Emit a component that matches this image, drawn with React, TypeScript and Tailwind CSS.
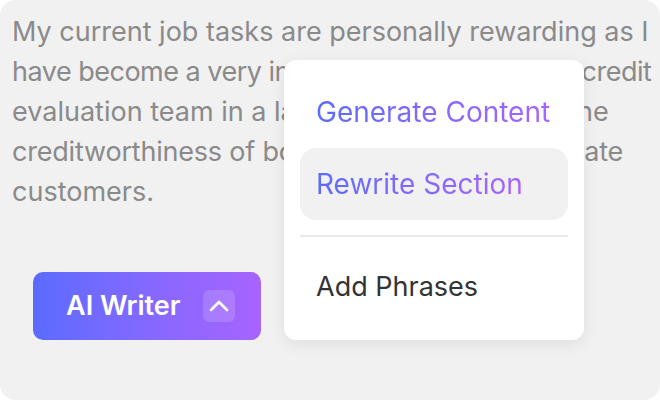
export default function App() {
  return (
    <div className="w-[660px] h-[400px] bg-white font-['Inter',sans-serif]">
      <div className="relative w-full h-full rounded-[16px] bg-[#f1f1f1] overflow-hidden">
        <p className="px-3 pt-3 text-[27px] leading-[40px] text-[#8a8a8a] whitespace-nowrap">
          My current job tasks are personally rewarding as I
          <br />
          <span className="tracking-[-0.5px]">
            have become a very important member of the credit
          </span>
          <br />
          evaluation team in a larger bank, assessing the
          <br />
          <span className="tracking-[-0.2px]">
            creditworthiness of both business and corporate
          </span>
          <br />
          customers.
        </p>

        <div className="pl-[33px] mt-[60px]">
          <button className="flex items-center h-[68px] w-[228px] pl-[33px] pr-[26px] rounded-[10px] bg-gradient-to-r from-[#5a6bff] to-[#a763ff] text-white">
            <span className="text-[27px] font-semibold">AI Writer</span>
            <span className="ml-auto flex items-center justify-center w-8 h-8 rounded-[6px] bg-white/15">
              <svg width="20" height="12" viewBox="0 0 20 12" fill="none">
                <polyline
                  points="2,10 10,2 18,10"
                  stroke="white"
                  strokeWidth="2.6"
                  strokeLinecap="round"
                  strokeLinejoin="round"
                />
              </svg>
            </span>
          </button>
        </div>

        <div className="absolute left-[284px] top-[60px] w-[300px] h-[280px] rounded-[12px] bg-white shadow-[0_4px_16px_rgba(0,0,0,0.08)] px-4 pt-4 text-[28px]">
          <div className="h-[72px] flex items-center px-4">
            <span className="bg-gradient-to-r from-[#5a6bff] to-[#a763ff] bg-clip-text text-transparent">
              Generate Content
            </span>
          </div>
          <div className="h-[72px] flex items-center px-4 rounded-[16px] bg-[#f1f1f1]">
            <span className="bg-gradient-to-r from-[#5a6bff] to-[#a763ff] bg-clip-text text-transparent">
              Rewrite Section
            </span>
          </div>
          <div className="h-[2px] bg-[#eaeaea] mt-[15px]" />
          <div className="h-[100px] flex items-center px-4 text-[27px] text-[#333333]">
            Add Phrases
          </div>
        </div>
      </div>
    </div>
  );
}
